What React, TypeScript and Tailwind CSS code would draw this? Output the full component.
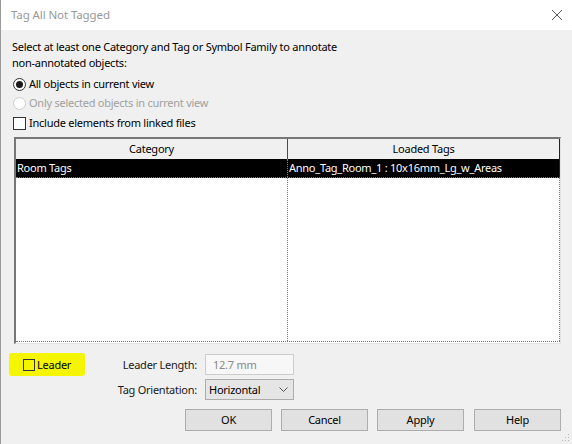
import React from 'react';

// Revit dialog: Tag All Not Tagged

const font = { fontFamily: '"Noto Sans", "Liberation Sans", sans-serif' };

const Radio: React.FC<{ checked?: boolean; disabled?: boolean; label: string }> = ({ checked, disabled, label }) => (
    <div className="flex items-center h-[16px] gap-[3px]">
        <span className={`w-[13px] h-[13px] rounded-full border flex items-center justify-center bg-white ${disabled ? 'border-[#cccccc]' : 'border-[#333333]'}`}>
            {checked && <span className="w-[7px] h-[7px] rounded-full bg-[#1a1a1a]" />}
        </span>
        <span className={disabled ? 'text-[#a0a0a0]' : 'text-black'}>{label}</span>
    </div>
);

const Button: React.FC<{ label: string }> = ({ label }) => (
    <div className="w-[87px] h-[22px] border border-[#adadad] bg-[#e1e1e1] flex items-center justify-center text-black">
        {label}
    </div>
);

export default function App() {
    return (
        <div className="w-[572px] h-[444px] bg-[#f0f0f0] border-l border-[#9a9a9a] text-[11px] leading-[16px] tracking-[-0.25px] relative overflow-hidden" style={font}>
            {/* TITLE BAR */}
            <div className="h-[30px] bg-white flex items-center justify-between pl-[10px] pr-[8px]">
                <span className="text-[#999999] text-[11.5px] tracking-[-0.1px]">Tag All Not Tagged</span>
                <svg width="12" height="12" viewBox="0 0 12 12" className="mr-[1px]">
                    <path d="M1 1 L11 11 M11 1 L1 11" stroke="#555555" strokeWidth="1" />
                </svg>
            </div>

            {/* BODY */}
            <div className="pl-[11px] pr-[11px] pt-[9px] flex flex-col">
                <div className="text-black">
                    Select at least one Category and Tag or Symbol Family to annotate<br />
                    non-annotated objects:
                </div>

                <div className="mt-[5px] ml-[1px]">
                    <Radio checked label="All objects in current view" />
                </div>
                <div className="mt-[3px] ml-[1px]">
                    <Radio disabled label="Only selected objects in current view" />
                </div>
                <div className="mt-[4px] ml-[1px] flex items-center h-[16px] gap-[3px]">
                    <span className="w-[13px] h-[13px] border border-[#333333] bg-white" />
                    <span>Include elements from linked files</span>
                </div>

                {/* TABLE */}
                <div className="mt-[6px] ml-[2px] h-[207px] border-t-2 border-l-2 border-t-[#777777] border-l-[#777777] border-r border-b border-r-[#e3e3e3] border-b-[#e3e3e3] bg-white flex flex-col">
                    <div className="h-[20px] grid grid-cols-[272px_1fr] bg-[#f0f0f0] shrink-0">
                        <div className="flex items-center justify-center border-r border-[#4a4a4a]">Category</div>
                        <div className="flex items-center justify-center border-r border-[#222222]">Loaded Tags</div>
                    </div>
                    <div className="h-[19px] grid grid-cols-[272px_1fr] bg-black text-white shrink-0 border-b border-dotted border-[#777777]">
                        <div className="flex items-center pl-[1px] border-r border-dotted border-[#888888]">Room Tags</div>
                        <div className="flex items-center pl-[1px] border-r border-[#222222]">Anno_Tag_Room_1 : 10x16mm_Lg_w_Areas</div>
                    </div>
                    <div className="flex-1 grid grid-cols-[272px_1fr] border-b border-dotted border-[#777777] mb-[1px]">
                        <div className="border-r border-dotted border-[#777777]" />
                        <div className="border-r border-dotted border-[#777777]" />
                    </div>
                </div>

                {/* LEADER ROW */}
                <div className="mt-[10px] flex items-center h-[21px]">
                    <div className="-ml-[3px] w-[76px] h-[23px] bg-[#f5f500] rounded-[3px] flex items-center pl-[14px] gap-[2px]">
                        <span className="w-[12px] h-[12px] border border-[#333333]" />
                        <span>Leader</span>
                    </div>
                    <div className="w-[112px] text-right text-[#1a1a1a]">Leader Length:</div>
                    <div className="ml-[8px] w-[89px] h-[21px] border border-[#cccccc] bg-[#f7f7f7] flex items-center pl-[7px] text-[#888888]">
                        12.7 mm
                    </div>
                </div>

                {/* ORIENTATION ROW */}
                <div className="mt-[4px] flex items-center h-[21px]">
                    <div className="w-[185px] text-right text-[#1a1a1a]">Tag Orientation:</div>
                    <div className="ml-[8px] w-[89px] h-[21px] border border-[#acacac] bg-[#e5e5e5] flex items-center justify-between pl-[3px] pr-[5px]">
                        <span>Horizontal</span>
                        <svg width="9" height="6" viewBox="0 0 9 6">
                            <path d="M0.5 0.5 L4.5 4.5 L8.5 0.5" stroke="#555555" strokeWidth="1" fill="none" />
                        </svg>
                    </div>
                </div>

                {/* BUTTONS */}
                <div className="mt-[9px] flex justify-end gap-[9px]">
                    <Button label="OK" />
                    <Button label="Cancel" />
                    <Button label="Apply" />
                    <div className="ml-[1px]"><Button label="Help" /></div>
                </div>
            </div>

            {/* RESIZE GRIP */}
            <svg width="9" height="9" viewBox="0 0 9 9" className="absolute right-[2px] bottom-[2px]">
                <rect x="7" y="1" width="1" height="1" fill="#b5b5b5" />
                <rect x="4" y="4" width="1" height="1" fill="#b5b5b5" />
                <rect x="7" y="4" width="1" height="1" fill="#b5b5b5" />
                <rect x="1" y="7" width="1" height="1" fill="#b5b5b5" />
                <rect x="4" y="7" width="1" height="1" fill="#b5b5b5" />
                <rect x="7" y="7" width="1" height="1" fill="#b5b5b5" />
            </svg>
        </div>
    );
}
